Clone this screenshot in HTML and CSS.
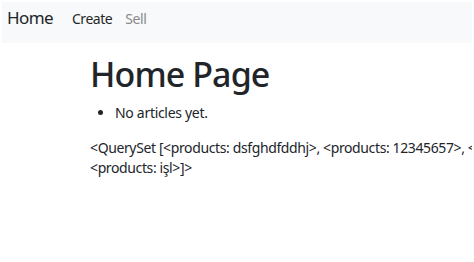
FILE: index.html
```html
<!DOCTYPE html>
<html>
<head>
<meta charset="utf-8">
<link rel="stylesheet" href="styles.css">
</head>
<body>
<nav class="navbar">
  <a class="brand" href="#">Home</a>
  <a class="nav-link active" href="#">Create</a>
  <a class="nav-link muted" href="#">Sell</a>
</nav>
<main class="container">
  <h1 class="title">Home Page</h1>
  <ul class="list">
    <li>No articles yet.</li>
  </ul>
  <p class="qs">&lt;QuerySet [&lt;products: dsfghdfddhj&gt;, &lt;products: 12345657&gt;, &lt;<br>&lt;products: işl&gt;]&gt;</p>
</main>
</body>
</html>
```
FILE: styles.css
```css
html, body {
  overflow: hidden;
}
body {
  margin: 2px;
  font-family: "Noto Sans", "Open Sans", sans-serif;
  color: #212529;
  background: #fff;
}
a {
  text-decoration: none;
}
.navbar {
  display: flex;
  align-items: baseline;
  height: 41px;
  width: 470px;
  background: #f8f9fa;
  padding: 4px 5px 0 5px;
  box-sizing: border-box;
}
.brand {
  font-size: 17px;
  line-height: 24px;
  letter-spacing: -0.6px;
  color: #212529;
  margin-right: 19px;
}
.nav-link {
  font-size: 14px;
  line-height: 24px;
  letter-spacing: -0.45px;
  margin-right: 13px;
}
.active {
  color: #262626;
}
.muted {
  color: #8a8a8a;
}
.container {
  padding-left: 88px;
  width: 700px;
}
.title {
  font-size: 34px;
  font-weight: 500;
  letter-spacing: -0.9px;
  line-height: 1.2;
  margin: 11px 0 0 0;
}
.list {
  margin: 8px 0 0 0;
  padding-left: 25px;
  font-size: 14px;
  letter-spacing: -0.3px;
  line-height: 20px;
}
.qs {
  font-size: 14px;
  letter-spacing: -0.38px;
  line-height: 20px;
  margin: 15px 0 0 0;
  white-space: nowrap;
}
```
